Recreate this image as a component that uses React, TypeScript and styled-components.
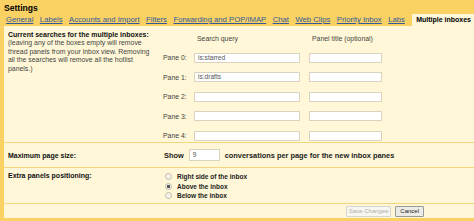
import React from 'react'
import styled, { createGlobalStyle } from 'styled-components'

const GlobalStyle = createGlobalStyle`
    html, body {
        margin: 0;
        padding: 0;
        background: #fad163;
    }
    body {
        font-family: "Liberation Sans", Arial, sans-serif;
        color: #222222;
    }
`;

const Frame = styled.div`
    width: 474px;
    height: 221px;
    background: #fad163;
    overflow: hidden;
    display: flex;
    flex-direction: column;
`;

const Title = styled.div`
    font-size: 8.6px;
    font-weight: bold;
    color: #000000;
    padding: 3px 0 0 4px;
    height: 11px;
    line-height: 11px;
`;

const TabBar = styled.div`
    display: flex;
    align-items: flex-end;
    height: 12px;
    padding-left: 6px;
`;

const TabLink = styled.a`
    font-size: 7.7px;
    color: #2f5a9e;
    text-decoration: underline;
    margin-right: 6.5px;
    line-height: 10px;
    padding-bottom: 1px;
    white-space: nowrap;
`;

const ActiveTab = styled.div`
    font-size: 7px;
    font-weight: bold;
    color: #000000;
    background: #fff7d7;
    padding: 0 3px 0 4px;
    height: 12px;
    line-height: 12px;
    margin-left: auto;
    white-space: nowrap;
`;

const Panel = styled.div`
    flex: 1;
    background: #fff7d7;
    margin-left: 4px;
    margin-bottom: 3px;
    display: flex;
    flex-direction: column;
`;

const Row = styled.div<{ h: number }>`
    display: grid;
    grid-template-columns: 158px 1fr;
    height: ${p => p.h}px;
    border-bottom: 1px solid #f5d57e;
    box-sizing: border-box;
`;

const LeftCell = styled.div<{ top: number }>`
    padding: ${p => p.top}px 4px 0 4px;
`;

const Heading = styled.div`
    font-size: 7px;
    font-weight: bold;
    color: #111111;
    line-height: 9px;
`;

const Note = styled.div`
    font-size: 6.9px;
    color: #444444;
    line-height: 8.5px;
    width: 150px;
`;

const PaneGrid = styled.div`
    display: grid;
    grid-template-columns: 22px 106px 73px;
    column-gap: 9px;
    grid-template-rows: 9px;
    grid-auto-rows: 10px;
    row-gap: 9.6px;
    padding-top: 8px;
    padding-left: 1px;
    align-items: center;
`;

const ColHead = styled.div`
    font-size: 6.9px;
    color: #444444;
    padding-left: 3px;
    margin-bottom: 1px;
`;

const PaneLabel = styled.div`
    font-size: 6.9px;
    color: #444444;
    white-space: nowrap;
`;

const TextBox = styled.div<{ w?: number; h?: number }>`
    width: ${p => (p.w ? `${p.w}px` : 'auto')};
    height: ${p => p.h ?? 10}px;
    box-sizing: border-box;
    background: #ffffff;
    border: 1px solid #d9d3bf;
    font-size: 6.6px;
    font-weight: normal;
    color: #555555;
    line-height: ${p => (p.h ?? 10) - 2}px;
    padding-left: 3px;
    white-space: nowrap;
`;

const RightCell = styled.div`
    display: flex;
    align-items: center;
    font-size: 7.4px;
    font-weight: bold;
    color: #222222;
    gap: 5px;
    padding-left: 2px;
    white-space: nowrap;
`;

const Radios = styled.div`
    display: flex;
    flex-direction: column;
    padding-top: 4px;
`;

const RadioRow = styled.div`
    display: flex;
    align-items: center;
    height: 9.5px;
    font-size: 6.5px;
    font-weight: bold;
    color: #222222;
    gap: 5px;
`;

const RadioDot = styled.span<{ on?: boolean }>`
    width: 5px;
    height: 5px;
    border-radius: 50%;
    border: 1px solid #c2bca8;
    background: ${p => (p.on ? 'radial-gradient(circle, #555 0 1.4px, #eee 1.6px)' : '#f4f2ea')};
    margin-left: 3px;
`;

const ButtonBar = styled.div`
    flex: 1;
    display: flex;
    justify-content: flex-end;
    align-items: center;
    gap: 4px;
    padding-right: 50px;
`;

const Button = styled.div<{ disabled?: boolean }>`
    font-size: 6px;
    height: 11px;
    line-height: 9px;
    padding: 0 ${p => (p.disabled ? 2 : 4)}px;
    box-sizing: border-box;
    border: 1px solid ${p => (p.disabled ? '#d6d6d0' : '#9a9a94')};
    background: ${p => (p.disabled ? '#f7f6f0' : '#ecebe6')};
    color: ${p => (p.disabled ? '#b0aea6' : '#222222')};
    border-radius: 1px;
    white-space: nowrap;
`;

const tabs = ['General', 'Labels', 'Accounts and Import', 'Filters', 'Forwarding and POP/IMAP', 'Chat', 'Web Clips', 'Priority Inbox', 'Labs'];

const panes = [
    { q: 'is:starred' },
    { q: 'is:drafts' },
    { q: '' },
    { q: '' },
    { q: '' },
];

export default function App() {
    return (
        <>
            <GlobalStyle />
            <Frame>
                <Title>Settings</Title>
                <TabBar>
                    {tabs.map(t => (
                        <TabLink key={t}>{t}</TabLink>
                    ))}
                    <ActiveTab>Multiple inboxes</ActiveTab>
                </TabBar>
                <Panel>
                    <Row h={117}>
                        <LeftCell top={4}>
                            <Heading>Current searches for the multiple inboxes:</Heading>
                            <Note>
                                (leaving any of the boxes empty will remove thread panels from your inbox view. Removing all the searches will remove all the hotlist panels.)
                            </Note>
                        </LeftCell>
                        <PaneGrid>
                            <span />
                            <ColHead>Search query</ColHead>
                            <ColHead>Panel title (optional)</ColHead>
                            {panes.map((p, i) => (
                                <React.Fragment key={i}>
                                    <PaneLabel>Pane {i}:</PaneLabel>
                                    <TextBox>{p.q}</TextBox>
                                    <TextBox />
                                </React.Fragment>
                            ))}
                        </PaneGrid>
                    </Row>
                    <Row h={25}>
                        <LeftCell top={8}>
                            <Heading>Maximum page size:</Heading>
                        </LeftCell>
                        <RightCell>
                            Show <TextBox w={31} h={12}>9</TextBox> conversations per page for the new inbox panes
                        </RightCell>
                    </Row>
                    <Row h={36}>
                        <LeftCell top={3}>
                            <Heading>Extra panels positioning:</Heading>
                        </LeftCell>
                        <Radios>
                            <RadioRow><RadioDot />Right side of the inbox</RadioRow>
                            <RadioRow><RadioDot on />Above the inbox</RadioRow>
                            <RadioRow><RadioDot />Below the inbox</RadioRow>
                        </Radios>
                    </Row>
                    <ButtonBar>
                        <Button disabled>Save Changes</Button>
                        <Button>Cancel</Button>
                    </ButtonBar>
                </Panel>
            </Frame>
        </>
    )
}
